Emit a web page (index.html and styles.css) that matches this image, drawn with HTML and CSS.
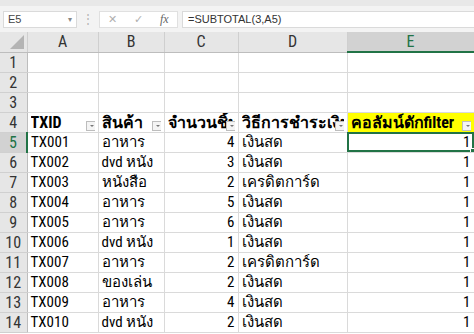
FILE: index.html
```html
<!DOCTYPE html>
<html lang="th">
<head>
    <meta charset="UTF-8">
    <title>Excel - SUBTOTAL filter</title>
    <link rel="stylesheet" href="styles.css">
</head>
<body>
    <div class="window">
        <!-- แถบสูตร -->
        <div class="formula-bar">
            <div class="name-box">
                <span>E5</span>
                <span class="name-arrow">▾</span>
            </div>
            <div class="grip">⋮</div>
            <div class="fx-buttons">
                <span class="fx-btn">✕</span>
                <span class="fx-btn">✓</span>
                <span class="fx-btn fx-label"><i>fx</i></span>
            </div>
            <div class="formula-input">=SUBTOTAL(3,A5)</div>
        </div>

        <!-- ตาราง -->
        <table class="sheet">
            <colgroup>
                <col class="col-rowhead">
                <col class="col-a">
                <col class="col-b">
                <col class="col-c">
                <col class="col-d">
                <col class="col-e">
            </colgroup>
            <thead>
                <tr>
                    <th class="corner"><span class="corner-tri"></span></th>
                    <th>A</th>
                    <th>B</th>
                    <th>C</th>
                    <th>D</th>
                    <th class="active-col">E</th>
                </tr>
            </thead>
            <tbody>
                <tr><td class="rowhead">1</td><td></td><td></td><td></td><td></td><td></td></tr>
                <tr><td class="rowhead">2</td><td></td><td></td><td></td><td></td><td></td></tr>
                <tr><td class="rowhead">3</td><td></td><td></td><td></td><td></td><td></td></tr>
                <tr class="table-head">
                    <td class="rowhead">4</td>
                    <td><div class="hcell">TXID<span class="filter"></span></div></td>
                    <td><div class="hcell">สินค้า<span class="filter"></span></div></td>
                    <td><div class="hcell">จำนวนชิ้น<span class="filter"></span></div></td>
                    <td><div class="hcell">วิธีการชำระเงิน<span class="filter"></span></div></td>
                    <td class="yellow"><div class="hcell">คอลัมน์ดักfilter<span class="filter"></span></div></td>
                </tr>
                <tr><td class="rowhead active-row">5</td><td>TX001</td><td>อาหาร</td><td class="num">4</td><td>เงินสด</td><td class="num selected">1<span class="handle"></span></td></tr>
                <tr><td class="rowhead">6</td><td>TX002</td><td>dvd หนัง</td><td class="num">3</td><td>เงินสด</td><td class="num">1</td></tr>
                <tr><td class="rowhead">7</td><td>TX003</td><td>หนังสือ</td><td class="num">2</td><td>เครดิตการ์ด</td><td class="num">1</td></tr>
                <tr><td class="rowhead">8</td><td>TX004</td><td>อาหาร</td><td class="num">5</td><td>เงินสด</td><td class="num">1</td></tr>
                <tr><td class="rowhead">9</td><td>TX005</td><td>อาหาร</td><td class="num">6</td><td>เงินสด</td><td class="num">1</td></tr>
                <tr><td class="rowhead">10</td><td>TX006</td><td>dvd หนัง</td><td class="num">1</td><td>เงินสด</td><td class="num">1</td></tr>
                <tr><td class="rowhead">11</td><td>TX007</td><td>อาหาร</td><td class="num">2</td><td>เครดิตการ์ด</td><td class="num">1</td></tr>
                <tr><td class="rowhead">12</td><td>TX008</td><td>ของเล่น</td><td class="num">2</td><td>เงินสด</td><td class="num">1</td></tr>
                <tr><td class="rowhead">13</td><td>TX009</td><td>อาหาร</td><td class="num">4</td><td>เงินสด</td><td class="num">1</td></tr>
                <tr><td class="rowhead">14</td><td>TX010</td><td>dvd หนัง</td><td class="num">2</td><td>เงินสด</td><td class="num">1</td></tr>
            </tbody>
        </table>
    </div>
</body>
</html>
```

FILE: styles.css
```css
* {
    margin: 0;
    padding: 0;
    box-sizing: border-box;
}

body {
    font-family: "Roboto Condensed", Roboto, "Liberation Sans", sans-serif;
    background: #ffffff;
    color: #000;
    overflow: hidden;
}

.window {
    width: 474px;
    height: 334px;
    overflow: hidden;
}

/* แถบสูตร */
.formula-bar {
    height: 32px;
    background: #f3f3f3;
    border-top: 6px solid #e8e8e8;
    display: flex;
    align-items: center;
    padding: 0 0 0 3px;
    font-family: "Liberation Sans", sans-serif;
}

.name-box {
    width: 74px;
    height: 17px;
    background: #fff;
    border: 1px solid #dadada;
    display: flex;
    align-items: center;
    justify-content: space-between;
    padding: 0 4px;
    font-size: 11px;
    color: #444;
}

.name-arrow {
    font-size: 8px;
    color: #888;
}

.grip {
    width: 22px;
    text-align: center;
    color: #b5b5b5;
    font-size: 12px;
}

.fx-buttons {
    width: 79px;
    height: 17px;
    background: #fff;
    border: 1px solid #e0e0e0;
    display: flex;
    align-items: center;
    justify-content: space-around;
    color: #b0b0b0;
    font-size: 11px;
}

.fx-label {
    color: #666;
    font-family: "Liberation Serif", serif;
    font-size: 12px;
}

.formula-input {
    flex: 1;
    height: 17px;
    margin-left: 4px;
    background: #fff;
    border: 1px solid #dadada;
    border-right: none;
    font-size: 11px;
    color: #333;
    padding: 1px 5px;
}

/* ตาราง */
.sheet {
    border-collapse: collapse;
    table-layout: fixed;
    width: 474px;
    font-size: 15px;
}

.col-rowhead { width: 27px; }
.col-a { width: 71px; }
.col-b { width: 66px; }
.col-c { width: 74px; }
.col-d { width: 109px; }
.col-e { width: 127px; }

.sheet th {
    height: 20px;
    background: #e6e6e6;
    border-right: 1px solid #cfcfcf;
    border-bottom: 1px solid #bdbdbd;
    font-weight: normal;
    color: #333;
    font-size: 16px;
}

.sheet th.active-col {
    background: #d2d2d2;
    color: #217346;
    border-bottom: 2px solid #217346;
}

.corner {
    position: relative;
}

.corner-tri {
    position: absolute;
    right: 3px;
    bottom: 3px;
    width: 0;
    height: 0;
    border-left: 14px solid transparent;
    border-bottom: 14px solid #b4b4b4;
}

.sheet td {
    height: 20px;
    border-right: 1px solid #dadada;
    border-bottom: 1px solid #dadada;
    padding: 0 3px;
    white-space: nowrap;
    overflow: hidden;
    line-height: 19px;
}

.sheet td.rowhead {
    background: #e6e6e6;
    text-align: center;
    color: #333;
    padding: 0;
    font-size: 16px;
    border-right: 1px solid #bdbdbd;
    border-bottom: 1px solid #d0d0d0;
}

.sheet td.active-row {
    background: #d2d2d2;
    color: #217346;
    border-right: 2px solid #217346;
}

.num {
    text-align: right;
}

.table-head td {
    font-weight: bold;
    font-size: 16px;
}

.table-head td.rowhead {
    font-weight: normal;
}

.hcell {
    position: relative;
    overflow: hidden;
}

.filter {
    position: absolute;
    right: -2px;
    bottom: 1px;
    width: 11px;
    height: 10px;
    background: #f4f4f4;
    border: 1px solid #bdbdbd;
}

.filter::after {
    content: "";
    position: absolute;
    left: 3px;
    top: 3px;
    border-left: 2px solid transparent;
    border-right: 2px solid transparent;
    border-top: 2px solid #777;
}

.yellow {
    background: #ffff00;
}

.selected {
    position: relative;
    outline: 2px solid #217346;
    outline-offset: -2px;
}

.handle {
    position: absolute;
    right: -1px;
    bottom: -1px;
    width: 5px;
    height: 5px;
    background: #217346;
    border: 1px solid #fff;
}
```
